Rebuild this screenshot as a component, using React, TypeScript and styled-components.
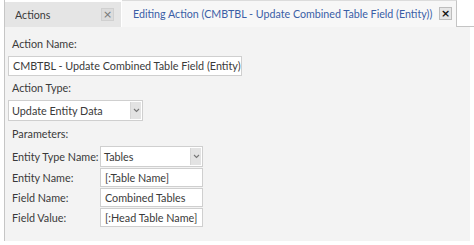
import React from "react";
import styled, { createGlobalStyle } from "styled-components";

const Global = createGlobalStyle`
  html, body { margin: 0; padding: 0; background: #ffffff; }
  body { font-family: "Lato", "Open Sans", sans-serif; font-size: 10.8px; color: #3a3a3a; }
  * { box-sizing: border-box; }
`;

const Frame = styled.div`
  width: 474px;
  height: 245px;
  display: flex;
  padding-left: 4px;
`;

const Edge = styled.div`
  width: 1px;
  height: 241px;
  background: #c6c6c6;
`;

const Main = styled.div`
  flex: 1;
  display: flex;
  flex-direction: column;
`;

const TabBar = styled.div`
  display: flex;
  align-items: flex-end;
  height: 27px;
`;

const Tab = styled.div<{ $active?: boolean }>`
  display: flex;
  align-items: center;
  height: ${(p) => (p.$active ? "27px" : "25px")};
  width: ${(p) => (p.$active ? "335px" : "116px")};
  margin-left: ${(p) => (p.$active ? "1px" : "0")};
  padding: ${(p) => (p.$active ? "0 4px 1px 11px" : "0 7px 0 10px")};
  background: ${(p) => (p.$active ? "#f7f7f7" : "#e5e5e5")};
  border-top: ${(p) => (p.$active ? "1px solid #dcdcdc" : "none")};
  border-right: ${(p) => (p.$active ? "1px solid #c4c4c4" : "none")};
  color: ${(p) => (p.$active ? "#3a5ea6" : "#3a3a3a")};
  font-size: 10.7px;
  white-space: nowrap;
  overflow: hidden;
`;

const TabLabel = styled.span`
  flex: 1;
  overflow: hidden;
`;

const Close = styled.span<{ $active?: boolean }>`
  flex: none;
  display: flex;
  align-items: center;
  justify-content: center;
  width: 13px;
  height: 13px;
  font-size: 11px;
  line-height: 1;
  font-family: "DejaVu Sans", sans-serif;
  font-weight: ${(p) => (p.$active ? "bold" : "normal")};
  color: ${(p) => (p.$active ? "#111" : "#777")};
  background: ${(p) => (p.$active ? "#e6e6e6" : "#dcdcdc")};
  border: 1px solid ${(p) => (p.$active ? "#bdbdbd" : "#d0d0d0")};
`;

const Filler = styled.div`
  flex: 1;
  height: 1px;
  background: #c4c4c4;
  align-self: flex-end;
`;

const Panel = styled.div`
  height: 214px;
  width: 465px;
  background: #f3f3f3;
  padding: 8px 3px 0 3px;
  display: flex;
  flex-direction: column;
  align-items: flex-start;
`;

const Label = styled.div<{ $mt?: number }>`
  padding-left: 4px;
  height: 18px;
  line-height: 18px;
  margin-top: ${(p) => p.$mt ?? 0}px;
  margin-bottom: 3px;
`;

const TextBox = styled.div<{ $w: number; $h?: number }>`
  width: ${(p) => p.$w}px;
  height: ${(p) => p.$h ?? 20}px;
  background: #ffffff;
  border: 1px solid #cfcfcf;
  padding: 0 4px;
  line-height: ${(p) => (p.$h ?? 20) - 2}px;
  white-space: nowrap;
  overflow: hidden;
`;

const SelectBox = styled.div<{ $w: number }>`
  width: ${(p) => p.$w}px;
  height: 21px;
  background: #ffffff;
  border: 1px solid #cfcfcf;
  display: flex;
  align-items: stretch;
`;

const SelectText = styled.span`
  flex: 1;
  padding-left: 3px;
  line-height: 19px;
  white-space: nowrap;
`;

const Arrow = styled.span`
  width: 11px;
  margin: 1px 1px 1px 0;
  background: #e3e3e3;
  border-left: 1px solid #d6d6d6;
  display: flex;
  align-items: center;
  justify-content: center;
`;

const Grid = styled.div`
  display: grid;
  grid-template-columns: 92px 103px;
  row-gap: 1px;
  align-items: center;
`;

const GridLabel = styled.div`
  padding-left: 4px;
  white-space: nowrap;
`;

const Chevron = () => (
  <svg width="7" height="5" viewBox="0 0 7 5">
    <path d="M1 1 L3.5 3.5 L6 1" fill="none" stroke="#777" strokeWidth="1.1" />
  </svg>
);

const Select = ({ w, value }: { w: number; value: string }) => (
  <SelectBox $w={w}>
    <SelectText>{value}</SelectText>
    <Arrow>
      <Chevron />
    </Arrow>
  </SelectBox>
);

export default function App() {
  return (
    <>
      <Global />
      <Frame>
        <Edge />
        <Main>
          <TabBar>
            <Tab>
              <TabLabel>Actions</TabLabel>
              <Close>×</Close>
            </Tab>
            <Tab $active>
              <TabLabel>Editing Action (CMBTBL - Update Combined Table Field (Entity))</TabLabel>
              <Close $active>×</Close>
            </Tab>
            <Filler />
          </TabBar>
          <Panel>
            <Label>Action Name:</Label>
            <TextBox $w={234}>CMBTBL - Update Combined Table Field (Entity)</TextBox>
            <Label $mt={3}>Action Type:</Label>
            <Select w={135} value="Update Entity Data" />
            <Label $mt={4}>Parameters:</Label>
            <Grid>
              <GridLabel>Entity Type Name:</GridLabel>
              <Select w={103} value="Tables" />
              <GridLabel>Entity Name:</GridLabel>
              <TextBox $w={103} $h={19}>[:Table Name]</TextBox>
              <GridLabel>Field Name:</GridLabel>
              <TextBox $w={103} $h={19}>Combined Tables</TextBox>
              <GridLabel>Field Value:</GridLabel>
              <TextBox $w={103} $h={19}>[:Head Table Name]</TextBox>
            </Grid>
          </Panel>
        </Main>
      </Frame>
    </>
  );
}
